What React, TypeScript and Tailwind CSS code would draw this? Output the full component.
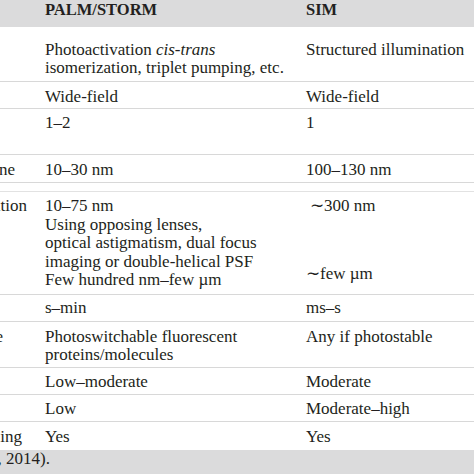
import React from "react";

const Label = ({ text, pr }: { text: string; pr: string }) => (
  <div className="w-[45px] shrink-0 overflow-hidden flex justify-end">
    <span className={`whitespace-nowrap ${pr}`}>{text}</span>
  </div>
);

export default function App() {
  return (
    <div
      className="w-[474px] h-[474px] overflow-hidden bg-white text-[#231f20] text-[17px] leading-[18px] flex flex-col"
      style={{ fontFamily: '"Liberation Serif", "Times New Roman", serif' }}
    >
      {/* header */}
      <div className="h-[27px] shrink-0 bg-[#dbdbdc] flex font-bold text-[16.5px]">
        <div className="w-[45px] shrink-0" />
        <div className="w-[261px] shrink-0 mt-[1px]">PALM/STORM</div>
        <div className="flex-1 mt-[1px]">SIM</div>
      </div>

      {/* row 1 */}
      <div className="h-[55px] shrink-0 flex pt-[14px] border-b border-[#d8d8d8]">
        <div className="w-[45px] shrink-0" />
        <div className="w-[261px] shrink-0">
          Photoactivation <i>cis-trans</i>
          <br />
          isomerization, triplet pumping, etc.
        </div>
        <div className="flex-1 whitespace-nowrap">Structured illumination</div>
      </div>

      {/* row 2 */}
      <div className="h-[27px] shrink-0 flex pt-[6px] border-b border-[#d8d8d8]">
        <div className="w-[45px] shrink-0" />
        <div className="w-[261px] shrink-0">Wide-field</div>
        <div className="flex-1">Wide-field</div>
      </div>

      {/* row 3 */}
      <div className="h-[46px] shrink-0 flex pt-[5px] border-b border-[#d8d8d8]">
        <div className="w-[45px] shrink-0" />
        <div className="w-[261px] shrink-0">1–2</div>
        <div className="flex-1">1</div>
      </div>

      {/* row 4 */}
      <div className="h-[28px] shrink-0 flex pt-[6px] border-b border-[#d8d8d8]">
        <Label text="in plane" pr="pr-[30px]" />
        <div className="w-[261px] shrink-0">10–30 nm</div>
        <div className="flex-1">100–130 nm</div>
      </div>

      {/* spacer */}
      <div className="h-[9px] shrink-0 border-b border-[#e2e2e2]" />

      {/* row 5 */}
      <div className="h-[103px] shrink-0 flex pt-[5px] leading-[18.6px] border-b border-[#d8d8d8]">
        <Label text="resolution" pr="pr-[18px]" />
        <div className="w-[261px] shrink-0">
          10–75 nm
          <br />
          Using opposing lenses,
          <br />
          optical astigmatism, dual focus
          <br />
          imaging or double-helical PSF
          <br />
          Few hundred nm–few µm
        </div>
        <div className="flex-1 flex flex-col pb-[10px]">
          <div className="pl-[4px]">∼300 nm</div>
          <div className="mt-auto">∼few µm</div>
        </div>
      </div>

      {/* row 6 */}
      <div className="h-[27px] shrink-0 flex pt-[4px] border-b border-[#d8d8d8]">
        <div className="w-[45px] shrink-0" />
        <div className="w-[261px] shrink-0">s–min</div>
        <div className="flex-1">ms–s</div>
      </div>

      {/* row 7 */}
      <div className="h-[46px] shrink-0 flex pt-[6px] border-b border-[#d8d8d8]">
        <Label text="Probe" pr="pr-[42px]" />
        <div className="w-[261px] shrink-0">
          Photoswitchable fluorescent
          <br />
          proteins/molecules
        </div>
        <div className="flex-1">Any if photostable</div>
      </div>

      {/* row 8 */}
      <div className="h-[27px] shrink-0 flex pt-[5px] border-b border-[#d8d8d8]">
        <div className="w-[45px] shrink-0" />
        <div className="w-[261px] shrink-0">Low–moderate</div>
        <div className="flex-1">Moderate</div>
      </div>

      {/* row 9 */}
      <div className="h-[27px] shrink-0 flex pt-[5px] border-b border-[#d8d8d8]">
        <div className="w-[45px] shrink-0" />
        <div className="w-[261px] shrink-0">Low</div>
        <div className="flex-1">Moderate–high</div>
      </div>

      {/* row 10 */}
      <div className="h-[28px] shrink-0 flex pt-[6px]">
        <Label text="ing" pr="pr-[23px]" />
        <div className="w-[261px] shrink-0">Yes</div>
        <div className="flex-1">Yes</div>
      </div>

      {/* footer */}
      <div className="flex-1 bg-[#dbdbdc] flex">
        <div className="w-[50px] shrink-0 overflow-hidden flex justify-end">
          <span className="whitespace-nowrap">, 2014).</span>
        </div>
      </div>
    </div>
  );
}
